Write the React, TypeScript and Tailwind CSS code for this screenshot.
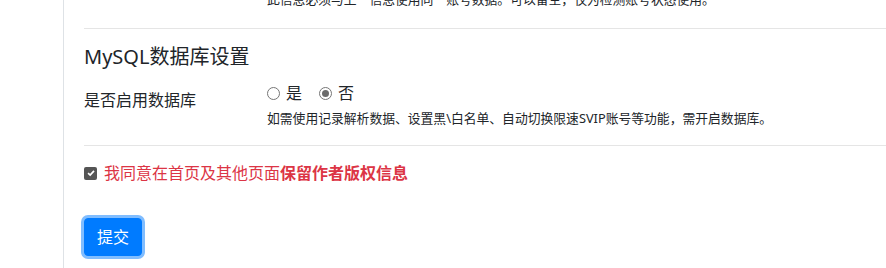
import React from 'react';

const font = { fontFamily: '"Noto Sans", "Noto Sans CJK SC", sans-serif' };

function Radio({ checked, label }: { checked?: boolean; label: string }) {
    return (
        <label className="flex items-center mr-[17px]">
            <span className="w-[13px] h-[13px] rounded-full border border-[#767676] flex items-center justify-center mr-[6px]">
                {checked && <span className="w-[7px] h-[7px] rounded-full bg-[#6b6b6b]" />}
            </span>
            <span>{label}</span>
        </label>
    );
}

export default function App() {
    return (
        <div className="flex w-[886px] h-[268px] overflow-hidden bg-white text-[#212529]" style={font}>
            <div className="w-[63px] shrink-0" />
            <div className="flex-1 border-l border-[#dee2e6] pl-5 min-w-0">
                <div className="flex -mt-[10px]">
                    <div className="w-[183px] shrink-0" />
                    <p className="text-[12.8px] leading-[19px] whitespace-nowrap">
                        此信息必须与上一信息使用同一账号数据。可以留空，仅为检测账号状态使用。
                    </p>
                </div>
                <hr className="mt-[19px] border-t border-[#e5e5e5] -mr-4" />

                <h5 className="mt-[16px] text-[20px] leading-[24px]">MySQL数据库设置</h5>

                <div className="flex mt-[12px]">
                    <div className="w-[183px] shrink-0 pt-[7px] text-[16px] leading-[24px]">是否启用数据库</div>
                    <div>
                        <div className="flex text-[16px] leading-[24px]">
                            <Radio label="是" />
                            <Radio checked label="否" />
                        </div>
                        <p className="mt-[4px] text-[12.8px] leading-[19px] whitespace-nowrap">
                            如需使用记录解析数据、设置黑\白名单、自动切换限速SVIP账号等功能，需开启数据库。
                        </p>
                    </div>
                </div>

                <hr className="mt-[17px] border-t border-[#e5e5e5] -mr-4" />

                <div className="flex items-center mt-[15px] text-[16px] leading-[24px] text-[#dc3545]">
                    <span className="w-[13px] h-[13px] rounded-[2px] bg-[#555] flex items-center justify-center mr-[7px]">
                        <svg viewBox="0 0 12 12" className="w-[10px] h-[10px]">
                            <path d="M2.5 6.2 L5 8.6 L9.6 3.4" stroke="white" strokeWidth="2" fill="none" />
                        </svg>
                    </span>
                    <span>
                        我同意在首页及其他页面<b className="font-bold">保留作者版权信息</b>
                    </span>
                </div>

                <button className="mt-[33px] bg-[#007bff] border border-[#007bff] rounded-[4px] px-3 py-[6px] text-[16px] leading-[24px] text-white ring-[3px] ring-[#80bdff]">
                    提交
                </button>
            </div>
        </div>
    );
}
